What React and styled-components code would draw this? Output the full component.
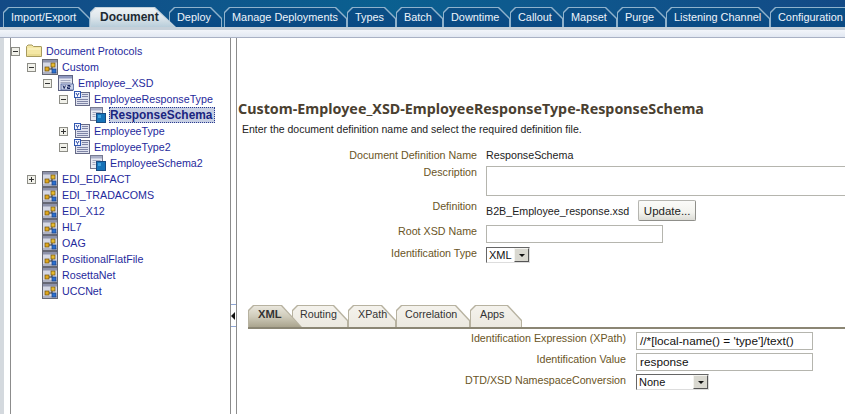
import { createGlobalStyle } from "styled-components";
import styled from "styled-components";

const GlobalStyle = createGlobalStyle`
  html, body {
    margin: 0;
    padding: 0;
    height: 100%;
    overflow: hidden;
    background: #fff;
  }
  #root {
    height: 100%;
  }
`;

const Page = styled.div`
  width: 845px;
  height: 414px;
  overflow: hidden;
  display: flex;
  flex-direction: column;
  font-family: "Liberation Sans", Tahoma, sans-serif;
  font-size: 10.7px;
  line-height: 14px;
`;

/* top tabs */
const TabBar = styled.div`
  height: 27px;
  flex: none;
  display: flex;
  align-items: flex-end;
  padding-left: 3px;
  background: linear-gradient(90deg, #134a86 0%, #0a6090 45%, #0d5a8e 60%, #134a86 100%);
`;

const Tab = styled.div`
  position: relative;
  flex: none;
  box-sizing: border-box;
  width: ${(p) => p.$w}px;
  height: 20px;
  margin-right: ${(p) => p.$gap || 0}px;
  margin-left: ${(p) => p.$pull || 0}px;
  z-index: ${(p) => (p.$active ? 2 : 1)};
  padding: 3px 0 0 ${(p) => (p.$active ? 10 : 8)}px;
  color: ${(p) => (p.$active ? "#1d2a33" : "#eef4fb")};
  font-weight: ${(p) => (p.$active ? 700 : 400)};
  font-size: ${(p) => (p.$active ? 12 : 10.9)}px;
  white-space: nowrap;
  background: ${(p) => (p.$active ? "#c3d2dc" : "#8fb2cc")};
  clip-path: ${(p) =>
    p.$active
      ? "polygon(0 100%, 0 5px, 5px 0, calc(100% - 21px) 0, 100% 100%)"
      : "polygon(0 100%, 0 5px, 5px 0, calc(100% - 11px) 0, 100% 11px, 100% 100%)"};
  &::before {
    content: "";
    position: absolute;
    z-index: -1;
    inset: 1px 0 0 1px;
    background: ${(p) =>
      p.$active
        ? "linear-gradient(180deg, #eef2f4 0%, #dfe7ec 45%, #b8cdda 100%)"
        : "linear-gradient(180deg, #0b4f86 0%, #0a4a84 100%)"};
    clip-path: ${(p) =>
      p.$active
        ? "polygon(0 100%, 0 5px, 5px 0, calc(100% - 22px) 0, calc(100% - 1px) 100%)"
        : "polygon(0 100%, 0 5px, 5px 0, calc(100% - 12px) 0, calc(100% - 1px) 11px, calc(100% - 1px) 100%)"};
  }
`;

const BandTop = styled.div`
  height: 3px;
  flex: none;
  background: #c6d0d9;
`;

const BandBottom = styled.div`
  height: 7px;
  flex: none;
  background: linear-gradient(180deg, #f2f5fa 0%, #e2e8f2 100%);
  border-bottom: 1px solid #a9b1c4;
`;

const Body = styled.div`
  flex: 1;
  min-height: 0;
  display: flex;
`;

const Gutter = styled.div`
  width: 11px;
  flex: none;
  box-sizing: border-box;
  background: linear-gradient(90deg, #d4d9de 0 4px, #fff 4px);
  border-right: 1px solid #8c8c8c;
`;

/* tree */
const TreePane = styled.div`
  width: 219px;
  flex: none;
  padding-top: 5px;
  margin-left: -1px;
  margin-right: 1px;
`;

const TreeRow = styled.div`
  display: flex;
  align-items: center;
  height: 16px;
  padding-left: ${(p) => p.$level * 16}px;
  color: #1f2a9c;
  white-space: nowrap;
`;

const ExpanderSlot = styled.span`
  width: 15px;
  flex: none;
  display: flex;
  padding-left: 1px;
`;

const Expander = styled.span`
  position: relative;
  display: block;
  box-sizing: border-box;
  width: 9px;
  height: 9px;
  border: 1px solid #8d8d86;
  background: #f1f1ea;
  &::before {
    content: "";
    position: absolute;
    left: 1px;
    top: 3px;
    width: 5px;
    height: 1px;
    background: #333;
  }
  &::after {
    content: "";
    display: ${(p) => (p.$open ? "none" : "block")};
    position: absolute;
    left: 3px;
    top: 1px;
    width: 1px;
    height: 5px;
    background: #333;
  }
`;

const IconBox = styled.span`
  width: 16px;
  height: 16px;
  flex: none;
  margin-right: 4px;
  svg {
    display: block;
  }
`;

const NodeLabel = styled.span`
  ${(p) =>
    p.$selected &&
    `
    font-weight: 700;
    font-size: 11.9px;
    color: #1a2580;
    background: #c7cfe3;
    outline: 1px dotted #2a3a90;
    outline-offset: -1px;
    padding: 1px 3px 1px 1px;
    margin-left: -1px;
  `}
`;

/* splitter */
const Splitter = styled.div`
  position: relative;
  width: 5px;
  flex: none;
  border-left: 1px solid #8c8c8c;
  border-right: 1px solid #8c8c8c;
`;

const CollapseHandle = styled.div`
  position: absolute;
  left: 0;
  top: 266px;
  box-sizing: border-box;
  width: 5px;
  height: 23px;
  border-top: 1px solid #8ea6d6;
  border-bottom: 1px solid #8ea6d6;
  display: flex;
  align-items: center;
  &::before {
    content: "";
    border-style: solid;
    border-width: 4px 4px 4px 0;
    border-color: transparent #111 transparent transparent;
  }
`;

/* detail */
const Detail = styled.div`
  flex: 1;
  min-width: 0;
  padding: 62px 0 0 1px;
`;

const Heading = styled.h1`
  margin: 0;
  font-family: "Noto Sans", Tahoma, sans-serif;
  font-size: 14.3px;
  line-height: 18px;
  font-weight: 700;
  color: #4a4030;
  white-space: nowrap;
`;

const Intro = styled.p`
  margin: 4px 0 0 4px;
  color: #222;
  font-size: 10.5px;
  line-height: 14px;
`;

const FormGrid = styled.div`
  display: grid;
  grid-template-columns: ${(p) => p.$labelWidth}px 1fr;
  column-gap: ${(p) => p.$col}px;
  row-gap: ${(p) => p.$gap || 0}px;
  margin-top: ${(p) => p.$top || 0}px;
`;

const Label = styled.div`
  text-align: right;
  color: #6a5526;
  white-space: nowrap;
  margin-top: ${(p) => (p.$flush ? 0 : -1)}px;
`;

const Field = styled.div`
  display: flex;
  align-items: center;
  gap: 9px;
  min-height: ${(p) => p.$h || 0}px;
  color: #222;
  white-space: nowrap;
`;

const TextInput = styled.div`
  box-sizing: border-box;
  width: ${(p) => p.$w}px;
  height: ${(p) => p.$h || 18}px;
  border: 1px solid #b5b5ae;
  background: #fff;
  padding: 1px 3px;
  color: #111;
  font-size: 11.8px;
  line-height: 14px;
  flex: none;
`;

const UpdateButton = styled.button`
  box-sizing: border-box;
  width: 58px;
  height: 21px;
  padding: 0;
  border: 1px solid #b5b5b0;
  border-right-color: #8f8f8a;
  border-bottom-color: #8f8f8a;
  border-radius: 2px;
  background: linear-gradient(180deg, #fbfbf9 0%, #f3f3ee 60%, #dcdcd6 100%);
  font: inherit;
  font-size: 11.5px;
  color: #222;
`;

const SelectBox = styled.div`
  box-sizing: border-box;
  width: ${(p) => p.$w}px;
  height: 16px;
  display: flex;
  align-items: center;
  justify-content: space-between;
  border: 1px solid;
  border-color: #666 #ddd #ddd #666;
  padding-left: 2px;
  color: #111;
  font-size: 11px;
  background: #fff;
`;

const SelectArrow = styled.span`
  box-sizing: border-box;
  width: 15px;
  height: 14px;
  display: flex;
  align-items: center;
  justify-content: center;
  background: #d9d8d0;
  border: 1px solid;
  border-color: #f4f4f0 #555 #555 #f4f4f0;
  &::before {
    content: "";
    border-style: solid;
    border-width: 3px 3px 0 3px;
    border-color: #111 transparent transparent transparent;
  }
`;

/* sub tabs */
const SubTabBar = styled.div`
  display: flex;
  align-items: flex-end;
  box-sizing: border-box;
  height: 24px;
  margin: 42px 0 0 10px;
  border-bottom: 2px solid #8b8674;
`;

const SubTab = styled.div`
  position: relative;
  flex: none;
  box-sizing: border-box;
  width: ${(p) => p.$w}px;
  height: 22px;
  margin-left: ${(p) => p.$ml || 0}px;
  padding: 2px 0 0 ${(p) => p.$pl}px;
  z-index: ${(p) => (p.$active ? 2 : 1)};
  color: #333;
  font-weight: ${(p) => (p.$active ? 700 : 400)};
  font-size: ${(p) => (p.$active ? 11.2 : 10.7)}px;
  background: #b7b2a0;
  clip-path: ${(p) =>
    p.$active
      ? "polygon(0 100%, 0 5px, 5px 0, calc(100% - 20px) 0, 100% 100%)"
      : "polygon(0 100%, 0 5px, 5px 0, calc(100% - 14px) 0, 100% 15px, 100% 100%)"};
  &::before {
    content: "";
    position: absolute;
    z-index: -1;
    inset: 1px 0 0 1px;
    background: ${(p) =>
      p.$active
        ? "linear-gradient(180deg, #e9e6dc 0%, #cfcbba 50%, #aaa48e 100%)"
        : "linear-gradient(180deg, #f4f2ec 0%, #ece9e0 100%)"};
    clip-path: ${(p) =>
      p.$active
        ? "polygon(0 100%, 0 5px, 5px 0, calc(100% - 21px) 0, calc(100% - 1px) 100%)"
        : "polygon(0 100%, 0 5px, 5px 0, calc(100% - 15px) 0, calc(100% - 1px) 15px, calc(100% - 1px) 100%)"};
  }
`;

const GroupIcon = () => (
  <svg width="16" height="16" viewBox="0 0 16 16">
    <rect x="0.5" y="0.5" width="15" height="15" fill="#d5d8e4" stroke="#666874" />
    <rect x="1" y="1" width="14" height="2.500" fill="#8d92aa" />
    <rect x="1" y="13" width="14" height="2" fill="#aeb2c4" />
    <path d="M6 10h4M10 10V6" stroke="#333" fill="none" />
    <rect x="3" y="8" width="4" height="4" fill="#e0a81e" stroke="#6e500c" strokeWidth="0.7" />
    <rect x="9" y="4" width="4" height="4" fill="#e6bb30" stroke="#6e500c" strokeWidth="0.7" />
    <rect x="10" y="10" width="4" height="4" fill="#2a6fd0" stroke="#1c3f80" strokeWidth="0.7" />
  </svg>
);

const FolderIcon = () => (
  <svg width="16" height="16" viewBox="0 0 16 16">
    <path d="M.5 3.500 2 2h4l1.500 1.500h7.500a.5.5 0 0 1 .5.5v9.500h-15z" fill="#f4e7a4" stroke="#a79a5e" />
    <path d="M1.500 5.500h13v1h-13z" fill="#fff8d2" />
    <path d="M1.500 11.500h13v1h-13z" fill="#dfcf7e" />
  </svg>
);

const XsdIcon = () => (
  <svg width="16" height="16" viewBox="0 0 16 16">
    <rect x="0.500" y="0.500" width="14" height="15" fill="#e4e7f2" stroke="#5f6482" />
    <rect x="1" y="1" width="13" height="2.500" fill="#8f98bf" />
    <path d="M2.500 5.500h10M2.500 7.500h10" stroke="#a6abc2" />
    <rect x="3" y="9" width="12.500" height="6" fill="#c9d0e6" stroke="#3a4f90" strokeWidth="0.7" />
    <path d="M5 10.500l1.200 3 1.200-3M9.500 10.500h2.500v1.500h-2.500v1.500h2.500" stroke="#14235c" fill="none" strokeWidth="1" />
  </svg>
);

const TypeIcon = () => (
  <svg width="16" height="16" viewBox="0 0 16 16">
    <rect x="1.500" y="1.500" width="14" height="13" fill="#dfe2ef" stroke="#666a86" />
    <path d="M8 3.500h6M8 5.500h6M3 8.500h11M3 10.500h11M3 12.500h11" stroke="#7f85a6" />
    <rect x="0.500" y="0.500" width="6" height="6" fill="#f4f6ff" stroke="#2f56b0" />
    <path d="M2 2l1.500 2.500L5 2M3.500 4.500v1" stroke="#2948a0" fill="none" />
  </svg>
);

const SchemaIcon = () => (
  <svg width="16" height="16" viewBox="0 0 16 16">
    <rect x="0.500" y="0.500" width="12" height="13" fill="#e8eaf2" stroke="#777a90" />
    <rect x="1" y="1" width="11" height="2.500" fill="#a9aec6" />
    <path d="M2.500 5.500h8M2.500 7.500h3M2.500 9.500h3" stroke="#a4a9bf" />
    <rect x="6.500" y="6.500" width="9" height="9" fill="#1673b8" stroke="#174a80" />
    <rect x="8" y="8" width="3" height="3" fill="#3fa0dc" />
  </svg>
);

const icons = {
  folder: FolderIcon,
  group: GroupIcon,
  xsd: XsdIcon,
  type: TypeIcon,
  schema: SchemaIcon,
};

const treeNodes = [
  { level: 0, icon: "folder", name: "Document Protocols", open: true },
  { level: 1, icon: "group", name: "Custom", open: true },
  { level: 2, icon: "xsd", name: "Employee_XSD", open: true },
  { level: 3, icon: "type", name: "EmployeeResponseType", open: true },
  { level: 4, icon: "schema", name: "ResponseSchema", selected: true },
  { level: 3, icon: "type", name: "EmployeeType", open: false },
  { level: 3, icon: "type", name: "EmployeeType2", open: true },
  { level: 4, icon: "schema", name: "EmployeeSchema2" },
  { level: 1, icon: "group", name: "EDI_EDIFACT", open: false },
  { level: 1, icon: "group", name: "EDI_TRADACOMS" },
  { level: 1, icon: "group", name: "EDI_X12" },
  { level: 1, icon: "group", name: "HL7" },
  { level: 1, icon: "group", name: "OAG" },
  { level: 1, icon: "group", name: "PositionalFlatFile" },
  { level: 1, icon: "group", name: "RosettaNet" },
  { level: 1, icon: "group", name: "UCCNet" },
];

const mainTabs = [
  { name: "Import/Export", w: 87 },
  { name: "Document", w: 86, active: true },
  { name: "Deploy", w: 53, pull: -7, gap: 2 },
  { name: "Manage Deployments", w: 123 },
  { name: "Types", w: 49 },
  { name: "Batch", w: 47 },
  { name: "Downtime", w: 67 },
  { name: "Callout", w: 53 },
  { name: "Mapset", w: 54 },
  { name: "Purge", w: 49 },
  { name: "Listening Channel", w: 104 },
  { name: "Configuration", w: 90 },
];

const subTabs = [
  { name: "XML", w: 54, pl: 10, active: true },
  { name: "Routing", w: 56, pl: 8, ml: -10 },
  { name: "XPath", w: 48, pl: 10 },
  { name: "Correlation", w: 74, pl: 9 },
  { name: "Apps", w: 52, pl: 10 },
];

const App = () => {
  return (
    <Page>
      <GlobalStyle />
      <TabBar>
        {mainTabs.map((tab) => (
          <Tab key={tab.name} $w={tab.w} $active={tab.active} $pull={tab.pull} $gap={tab.gap}>
            {tab.name}
          </Tab>
        ))}
      </TabBar>
      <BandTop />
      <BandBottom />
      <Body>
        <Gutter />
        <TreePane>
          {treeNodes.map((node) => {
            const Icon = icons[node.icon];
            return (
              <TreeRow key={node.name} $level={node.level}>
                <ExpanderSlot>
                  {node.open !== undefined && <Expander $open={node.open} />}
                </ExpanderSlot>
                <IconBox>
                  <Icon />
                </IconBox>
                <NodeLabel $selected={node.selected}>{node.name}</NodeLabel>
              </TreeRow>
            );
          })}
        </TreePane>
        <Splitter>
          <CollapseHandle />
        </Splitter>
        <Detail>
          <Heading>Custom-Employee_XSD-EmployeeResponseType-ResponseSchema</Heading>
          <Intro>Enter the document definition name and select the required definition file.</Intro>
          <FormGrid $labelWidth={239} $col={9} $gap={4} $top={12}>
            <Label $flush>Document Definition Name</Label>
            <Field $h={13}>ResponseSchema</Field>
            <Label>Description</Label>
            <Field>
              <TextInput $w={400} $h={30} />
            </Field>
            <Label>Definition</Label>
            <Field $h={21}>
              B2B_Employee_response.xsd
              <UpdateButton>Update...</UpdateButton>
            </Field>
            <Label>Root XSD Name</Label>
            <Field>
              <TextInput $w={177} />
            </Field>
            <Label>Identification Type</Label>
            <Field>
              <SelectBox $w={44}>
                XML
                <SelectArrow />
              </SelectBox>
            </Field>
          </FormGrid>
          <SubTabBar>
            {subTabs.map((tab) => (
              <SubTab key={tab.name} $w={tab.w} $pl={tab.pl} $active={tab.active} $ml={tab.ml}>
                {tab.name}
              </SubTab>
            ))}
          </SubTabBar>
          <FormGrid $labelWidth={388} $col={10} $gap={3} $top={3}>
            <Label>Identification Expression (XPath)</Label>
            <Field>
              <TextInput $w={177}>//*[local-name() = 'type']/text()</TextInput>
            </Field>
            <Label>Identification Value</Label>
            <Field>
              <TextInput $w={177}>response</TextInput>
            </Field>
            <Label>DTD/XSD NamespaceConversion</Label>
            <Field>
              <SelectBox $w={73}>
                None
                <SelectArrow />
              </SelectBox>
            </Field>
          </FormGrid>
        </Detail>
      </Body>
    </Page>
  );
};

export default App;
